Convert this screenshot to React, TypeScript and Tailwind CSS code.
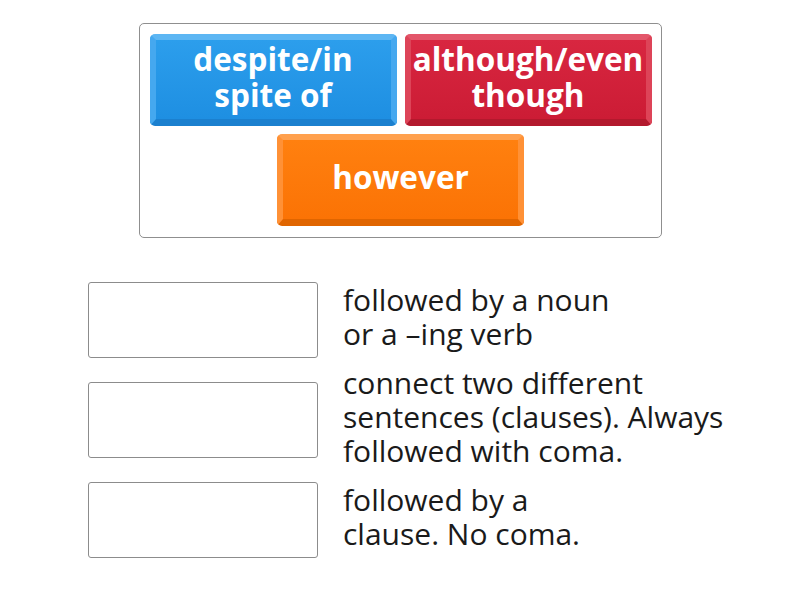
import React from "react";

function Tile({ label, variant }: { label: React.ReactNode; variant: "blue" | "red" | "orange" }) {
  const cls =
    variant === "blue"
      ? "border-t-[#5db6f3] border-x-[#45a8ef] border-b-[#1b80cf] bg-gradient-to-b from-[#2c9eec] to-[#1e8fe2]"
      : variant === "red"
      ? "border-t-[#e3566a] border-x-[#dd4458] border-b-[#b3192d] bg-gradient-to-b from-[#d82640] to-[#cc1c35]"
      : "border-t-[#ffa04d] border-x-[#ff9136] border-b-[#e06500] bg-gradient-to-b from-[#ff800f] to-[#fb7305]";
  return (
    <div
      className={`w-[247px] h-[92px] rounded-[5px] border-t-[6px] border-x-[6px] border-b-[7px] ${cls} flex items-center justify-center text-white font-bold text-[31.5px] leading-[36px] text-center whitespace-nowrap`}
      style={{ fontFamily: '"Open Sans", sans-serif' }}
    >
      <span className="-mt-[5px]">{label}</span>
    </div>
  );
}

function Row({ text }: { text: React.ReactNode }) {
  return (
    <div className="flex items-center h-[76px]">
      <div className="w-[230px] h-[76px] border border-[#8c8c8c] rounded-[3px] bg-white shrink-0" />
      <div className="ml-[25px] text-[30px] leading-[34px] text-[#1a1a1a] -mt-[7px] whitespace-nowrap">{text}</div>
    </div>
  );
}

export default function App() {
  return (
    <div
      className="w-[800px] h-[600px] bg-white relative overflow-hidden"
      style={{ fontFamily: '"Open Sans", sans-serif' }}
    >
      <div className="pt-[23px] flex justify-center">
        <div className="w-[523px] h-[215px] border border-[#8f8f8f] rounded-[5px] pt-[10px] px-[9px] flex flex-col items-center gap-[8px] ml-[1px]">
          <div className="flex gap-[8px]">
            <Tile variant="blue" label={<>despite/in<br />spite of</>} />
            <Tile variant="red" label={<>although/even<br />though</>} />
          </div>
          <Tile variant="orange" label="however" />
        </div>
      </div>
      <div className="pl-[88px] pt-[44px] flex flex-col gap-[24px]">
        <Row text={<>followed by a noun<br />or a –ing verb</>} />
        <Row text={<>connect two different<br />sentences (clauses). Always<br />followed with coma.</>} />
        <Row text={<>followed by a<br />clause. No coma.</>} />
      </div>
    </div>
  );
}
